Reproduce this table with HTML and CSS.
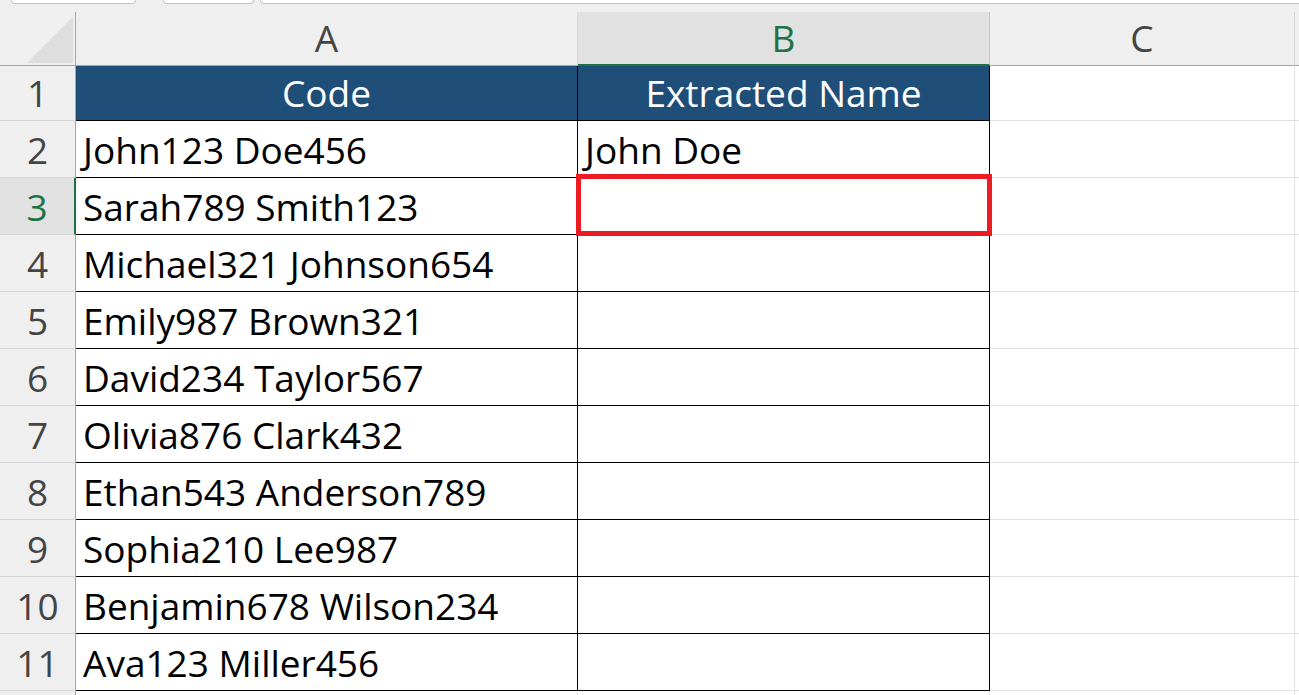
FILE: index.html
```html
<!DOCTYPE html>
<html lang="en">
<head>
<meta charset="utf-8">
<title>Extract Name</title>
<link rel="stylesheet" href="styles.css">
</head>
<body>
<div class="topbar">
  <div class="tb tb-name"></div>
  <div class="tb tb-fx"></div>
  <div class="tb tb-formula"></div>
</div>
<div class="sheet">
  <div class="corner"><svg class="tri" width="46" height="46" viewBox="0 0 46 46"><polygon points="0,46 46,46 46,0" fill="#dedede"/></svg></div>
  <div class="colhead">A</div>
  <div class="colhead sel">B</div>
  <div class="colhead">C</div>
  <div class="colhead last"></div>

  <div class="rowhead">1</div>
  <div class="cell tbl hdr">Code</div>
  <div class="cell tbl hdr">Extracted Name</div>
  <div class="cell grid"></div>
  <div class="cell grid last"></div>

  <div class="rowhead">2</div>
  <div class="cell tbl">John123 Doe456</div>
  <div class="cell tbl">John Doe</div>
  <div class="cell grid"></div>
  <div class="cell grid last"></div>

  <div class="rowhead sel">3</div>
  <div class="cell tbl">Sarah789 Smith123</div>
  <div class="cell tbl active"><div class="mark"></div></div>
  <div class="cell grid"></div>
  <div class="cell grid last"></div>

  <div class="rowhead">4</div>
  <div class="cell tbl">Michael321 Johnson654</div>
  <div class="cell tbl"></div>
  <div class="cell grid"></div>
  <div class="cell grid last"></div>

  <div class="rowhead">5</div>
  <div class="cell tbl">Emily987 Brown321</div>
  <div class="cell tbl"></div>
  <div class="cell grid"></div>
  <div class="cell grid last"></div>

  <div class="rowhead">6</div>
  <div class="cell tbl">David234 Taylor567</div>
  <div class="cell tbl"></div>
  <div class="cell grid"></div>
  <div class="cell grid last"></div>

  <div class="rowhead">7</div>
  <div class="cell tbl">Olivia876 Clark432</div>
  <div class="cell tbl"></div>
  <div class="cell grid"></div>
  <div class="cell grid last"></div>

  <div class="rowhead">8</div>
  <div class="cell tbl">Ethan543 Anderson789</div>
  <div class="cell tbl"></div>
  <div class="cell grid"></div>
  <div class="cell grid last"></div>

  <div class="rowhead">9</div>
  <div class="cell tbl">Sophia210 Lee987</div>
  <div class="cell tbl"></div>
  <div class="cell grid"></div>
  <div class="cell grid last"></div>

  <div class="rowhead">10</div>
  <div class="cell tbl">Benjamin678 Wilson234</div>
  <div class="cell tbl"></div>
  <div class="cell grid"></div>
  <div class="cell grid last"></div>

  <div class="rowhead">11</div>
  <div class="cell tbl">Ava123 Miller456</div>
  <div class="cell tbl"></div>
  <div class="cell grid"></div>
  <div class="cell grid last"></div>

  <div class="rowhead"></div>
  <div class="cell grid"></div>
  <div class="cell grid"></div>
  <div class="cell grid"></div>
  <div class="cell grid last"></div>
</div>
</body>
</html>
```
FILE: styles.css
```css
* { box-sizing: border-box; }
html, body {
  margin: 0;
  padding: 0;
  width: 1299px;
  height: 695px;
  overflow: hidden;
  background: #ffffff;
  font-family: "Open Sans", "Liberation Sans", sans-serif;
}
.topbar {
  height: 12px;
  background: #efefef;
  display: flex;
  align-items: flex-start;
  padding-left: 11px;
}
.tb {
  height: 4px;
  background: #ffffff;
  border: 1px solid #c4c4c4;
  border-top: none;
  border-radius: 0 0 4px 4px;
}
.tb-name { width: 125px; }
.tb-fx { width: 91px; margin-left: 27px; }
.tb-formula { flex: 1; margin-left: 6px; border-right: none; border-radius: 0 0 0 4px; }

.sheet {
  display: grid;
  grid-template-columns: 76px 502px 412px 305px 1fr;
  grid-template-rows: 54px 55px repeat(10, 57px) 1fr;
  height: 683px;
  font-size: 37px;
  line-height: 37px;
}
.corner {
  background: #efefef;
  border-right: 1px solid #a6a6a6;
  border-bottom: 1px solid #a6a6a6;
  display: flex;
  align-items: flex-end;
  justify-content: flex-end;
  padding: 0 2px 2px 0;
}
.tri { display: block; }
.colhead {
  background: #efefef;
  border-right: 1px solid #d6d6d6;
  border-bottom: 1px solid #a6a6a6;
  color: #444444;
  display: flex;
  align-items: flex-end;
  justify-content: center;
  padding-bottom: 9px;
}
.colhead.sel {
  background: #e1e1e1;
  color: #217346;
  border-bottom: 2px solid #217346;
  padding-bottom: 8px;
  border-right-color: #c4c4c4;
}
.colhead.last { border-right: none; }
.rowhead {
  background: #efefef;
  border-right: 1px solid #a6a6a6;
  border-bottom: 1px solid #d6d6d6;
  color: #444444;
  display: flex;
  align-items: flex-end;
  justify-content: center;
  padding-bottom: 9px;
}
.rowhead.sel {
  background: #e1e1e1;
  color: #217346;
  border-right: 2px solid #217346;
}
.cell {
  display: flex;
  align-items: flex-end;
  padding: 0 7px 9px;
  color: #000000;
  white-space: nowrap;
}
.cell.tbl {
  border-right: 1px solid #000000;
  border-bottom: 1px solid #000000;
}
.cell.hdr {
  background: #1f4e79;
  color: #ffffff;
  justify-content: center;
}
.cell.grid {
  border-right: 1px solid #e1e1e1;
  border-bottom: 1px solid #e1e1e1;
}
.cell.last { border-right: none; }
.cell.active { position: relative; }
.mark {
  position: absolute;
  left: -2px;
  top: -4px;
  width: 416px;
  height: 62px;
  border: 5px solid #ed1c24;
}
```
